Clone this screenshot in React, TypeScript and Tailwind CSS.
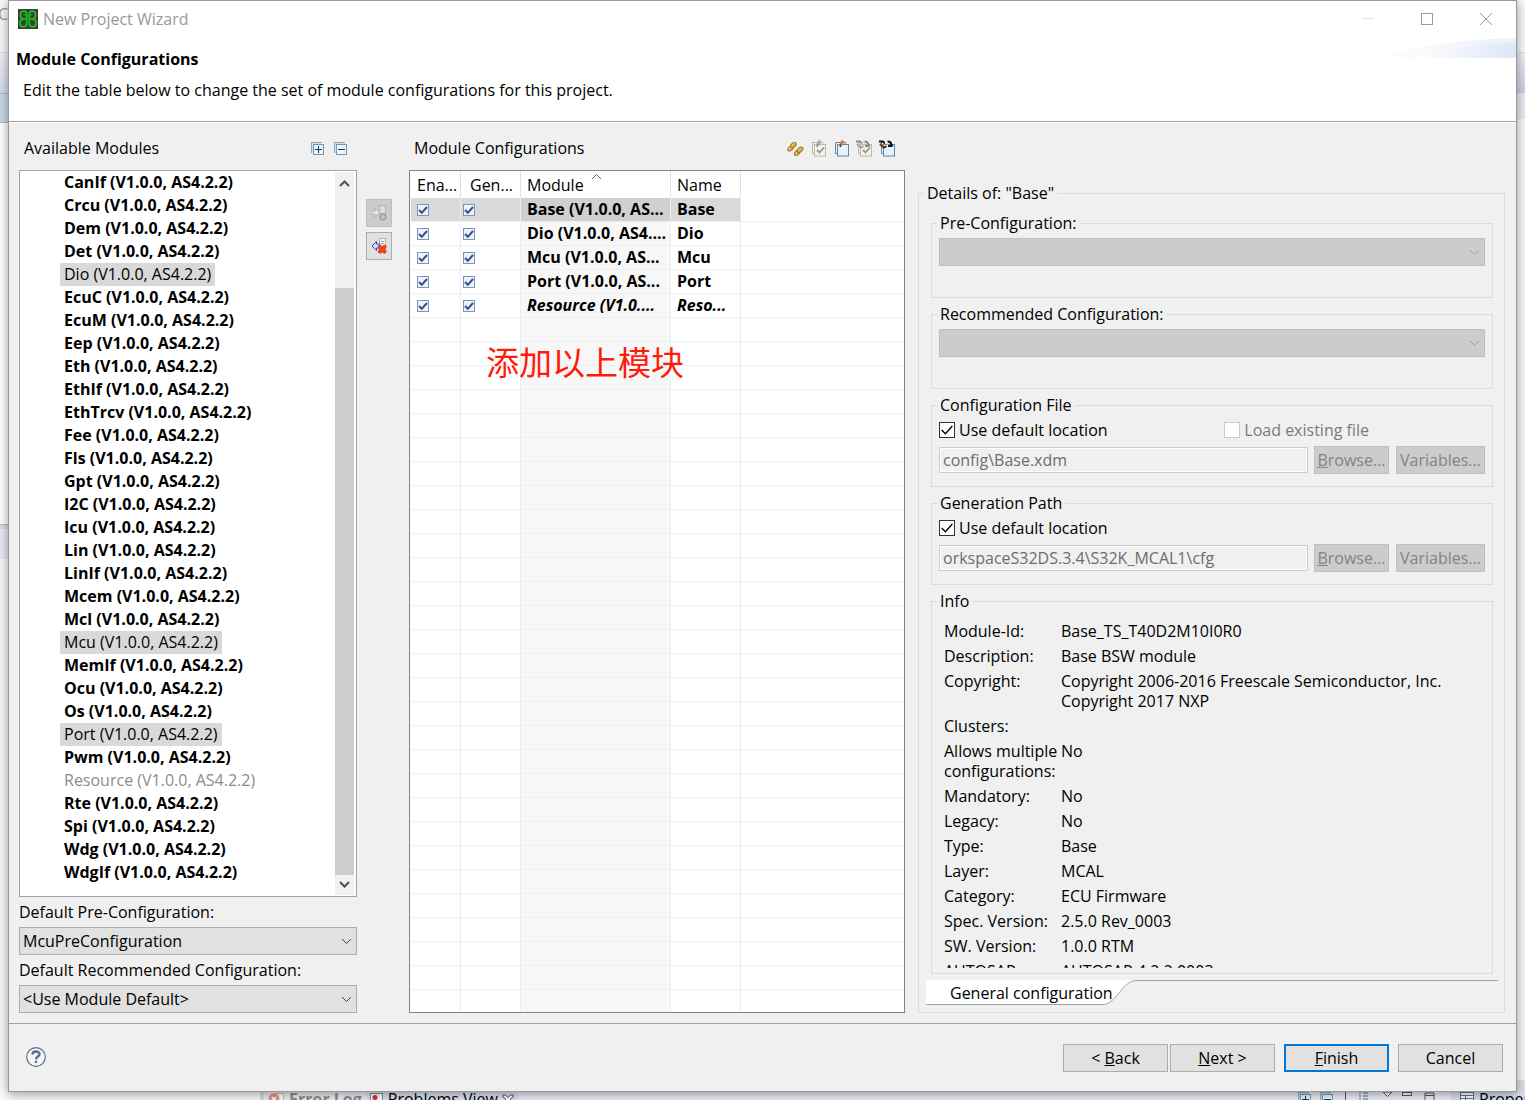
import React from 'react';

const modules = [
  'CanIf', 'Crcu', 'Dem', 'Det', 'Dio', 'EcuC', 'EcuM', 'Eep', 'Eth', 'EthIf', 'EthTrcv',
  'Fee', 'Fls', 'Gpt', 'I2C', 'Icu', 'Lin', 'LinIf', 'Mcem', 'Mcl', 'Mcu', 'MemIf', 'Ocu',
  'Os', 'Port', 'Pwm', 'Resource', 'Rte', 'Spi', 'Wdg', 'WdgIf',
];
const addedModules = ['Dio', 'Mcu', 'Port'];

const configurations = [
  { module: 'Base (V1.0.0, AS...', name: 'Base' },
  { module: 'Dio (V1.0.0, AS4....', name: 'Dio' },
  { module: 'Mcu (V1.0.0, AS...', name: 'Mcu' },
  { module: 'Port (V1.0.0, AS...', name: 'Port' },
  { module: 'Resource (V1.0....', name: 'Reso...' },
];
const emptyRows = Array.from({ length: 29 }, (_, i) => i);

const info = [
  ['Module-Id:', 'Base_TS_T40D2M10I0R0'],
  ['Description:', 'Base BSW module'],
  ['Copyright:', 'Copyright 2006-2016 Freescale Semiconductor, Inc.\nCopyright 2017 NXP'],
  ['Clusters:', ''],
  ['Allows multiple configurations:', 'No'],
  ['Mandatory:', 'No'],
  ['Legacy:', 'No'],
  ['Type:', 'Base'],
  ['Layer:', 'MCAL'],
  ['Category:', 'ECU Firmware'],
  ['Spec. Version:', '2.5.0 Rev_0003'],
  ['SW. Version:', '1.0.0 RTM'],
  ['AUTOSAR:', 'AUTOSAR 4.2.2 0003'],
];

const TreeIcon = ({ minus = false }: { minus?: boolean }) => (
  <svg width="14" height="14" viewBox="0 0 14 14" shapeRendering="crispEdges">
    <path d="M0.5 10.5V0.5H10.5" fill="none" stroke="#8fa9c4" />
    <path d="M1 1h10v2H3v8H1z" fill="#cfe3f0" />
    <rect x="2.5" y="2.5" width="10" height="10" fill="#eaf6fd" stroke="#7c93b0" />
    <path d={minus ? 'M4 7.5h7' : 'M4 7.5h7M7.5 4v7'} stroke="#0a3f78" />
  </svg>
);

const Chevron = ({ className = '' }: { className?: string }) => (
  <svg className={className} width="11" height="7" viewBox="0 0 11 7" fill="none" stroke="currentColor">
    <path d="M1 1l4.5 4.5L10 1" />
  </svg>
);

const Tick = ({ className = '' }: { className?: string }) => (
  <svg className={className} viewBox="0 0 12 12" fill="none" stroke="currentColor">
    <path d="M2 6l2.800 2.800L10 3" />
  </svg>
);

const ChainIcon = () => (
  <svg width="17" height="16" viewBox="0 0 18 16" fill="none">
    <g fill="#f4dc96" stroke="#a8741a" strokeWidth="1.300">
      <ellipse cx="3.800" cy="7.300" rx="2" ry="3.300" transform="rotate(50 3.800 7.300)" />
      <ellipse cx="6.800" cy="3.800" rx="2" ry="3.300" transform="rotate(50 6.800 3.800)" />
      <ellipse cx="10.800" cy="12" rx="2" ry="3.300" transform="rotate(50 10.800 12)" />
      <ellipse cx="13.800" cy="8.800" rx="2" ry="3.300" transform="rotate(50 13.800 8.800)" />
    </g>
    <path d="M3 8l2-1.800M6 5l2-1.800M10 12.800l2-1.800M13 9.800l2-1.800" stroke="#a8741a" />
  </svg>
);

const PagesIcon = ({ disabled = false, arrow = false }: { disabled?: boolean; arrow?: boolean }) => {
  const line = disabled ? '#b9b9ad' : '#5f86ab';
  const page = disabled ? '#f3f3ec' : '#e6f3fd';
  return (
    <svg width="17" height="17" viewBox="0 0 17 17" fill="none">
      <path d="M2.500 13.500v-11h10v3" fill={page} stroke={line} />
      <path d="M2.500 13.500h2" stroke={line} />
      <rect x="4.500" y="4.500" width="11" height="11.500" fill={page} stroke={line} />
      {disabled && <path d="M7 10l2.500 2.500 4.500-5" stroke="#96968c" strokeWidth="1.800" />}
      {arrow ? (
        <>
          <path d="M0 1.500h4l2 2M8.500 1.500l2.500.5 2.500 4.500M9 6h4" stroke={disabled ? '#8c8c86' : '#111'} strokeWidth="2" />
          <path d="M1 4l4.500 4" stroke={disabled ? '#b0b0a8' : '#8a3a1c'} strokeWidth="2.400" />
          <path d="M5 8l2.500-2" stroke={disabled ? '#8c8c86' : '#111'} strokeWidth="1.600" />
          <path d="M6 1.500l3.500 2.500" stroke={disabled ? '#d6d6ce' : '#f4ecb0'} strokeWidth="2" />
        </>
      ) : (
        <>
          <path d="M10 .5L8 5" stroke={disabled ? '#a9a9a0' : '#d5803c'} strokeWidth="3.200" />
          <path d="M7.800 4.500L7 7" stroke={disabled ? '#777' : '#3a2a20'} strokeWidth="1.500" />
        </>
      )}
    </svg>
  );
};

const Group = ({ title, className = '', children }: { title: string; className?: string; children: React.ReactNode }) => (
  <fieldset className={`min-w-0 border border-[#dcdcdc] px-[7px] ${className}`}>
    <legend className="-ml-[2px] px-[3px] leading-5">{title}</legend>
    {children}
  </fieldset>
);

const DisabledSelect = ({ label }: { label: string }) => (
  <div className="relative mt-[5px] mb-[31px]">
    <select aria-label={label} disabled className="block h-[28px] w-full appearance-none border border-[#bfbfbf] bg-[#cccccc] opacity-100" />
    <Chevron className="pointer-events-none absolute top-[11px] right-[5px] text-[#a0a0a0]" />
  </div>
);

const Check = ({ label, disabled = false }: { label: string; disabled?: boolean }) => (
  <label className={`flex items-center gap-1 ${disabled ? 'text-[#7a7a7a]' : ''}`}>
    <span className="relative flex">
      <input
        type="checkbox"
        defaultChecked={!disabled}
        disabled={disabled}
        className="peer size-4 appearance-none border border-[#333333] bg-white disabled:border-[#cccccc]"
      />
      <Tick className="pointer-events-none absolute inset-0 hidden size-4 text-black peer-checked:block" />
    </span>
    {label}
  </label>
);

const PathRow = ({ label, value }: { label: string; value: string }) => (
  <div className="mt-[6px] mb-3 flex items-center">
    <input
      aria-label={label}
      disabled
      defaultValue={value}
      className="h-[26px] min-w-0 flex-1 border border-[#cccccc] bg-[#f0f0f0] px-[3px] text-[#6d6d6d] ring-1 ring-white ring-inset"
    />
    <button disabled className="ml-[6px] h-[28px] w-[75px] border border-[#bfbfbf] bg-[#cccccc] text-[#838383]">
      <u>B</u>rowse...
    </button>
    <button disabled className="ml-[7px] h-[28px] w-[89px] border border-[#bfbfbf] bg-[#cccccc] text-[#838383]">
      Variables...
    </button>
  </div>
);

const DefaultSelect = ({ id, label, value }: { id: string; label: string; value: string }) => (
  <div>
    <label htmlFor={id} className="flex h-[30px] items-center">{label}</label>
    <div className="relative">
      <select id={id} className="block h-[28px] w-full appearance-none border border-[#adadad] bg-[#e1e1e1] pl-[3px]">
        <option>{value}</option>
      </select>
      <Chevron className="pointer-events-none absolute top-[11px] right-[5px] text-[#444444]" />
    </div>
  </div>
);

const TableCheck = ({ label }: { label: string }) => (
  <span className="relative block size-3">
    <input type="checkbox" defaultChecked aria-label={label} className="peer block size-3 appearance-none border border-[#7f93b3] bg-[#e8f5fd]" />
    <Tick className="pointer-events-none absolute inset-0 hidden size-3 stroke-2 text-[#3a4f7c] peer-checked:block" />
  </span>
);

// Workbench that stays partly visible around the dialog
const Workbench = () => (
  <div className="absolute inset-0 flex flex-col bg-[#f8f8f8]">
    <div className="flex min-h-0 flex-1 justify-between">
      <div className="w-2 overflow-hidden">
        <div className="flex h-[53px] justify-end border-b border-[#dddddd] pt-1 text-[#999999]">MC</div>
        <div className="h-10 bg-linear-to-b from-[#eef0f8] to-[#d5d9ea]" />
        <div className="h-[30px] border-y border-[#a9b9cf] bg-[#c9d8e6]" />
        <div className="h-[401px] bg-white" />
        <div className="h-[5px] border-t border-[#bbbbbb] bg-[#d6dcec]" />
        <div className="h-[30px] bg-[#e9eaf3]" />
      </div>
      <div className="w-2">
        <div className="h-[53px] border-b border-[#dddddd]" />
        <div className="h-10 bg-linear-to-b from-[#eef0f8] to-[#c9d0e4]" />
        <div className="h-[26px] bg-[#e9ebf3]" />
      </div>
    </div>
    <div className="flex h-5 overflow-hidden bg-[#eceef6] pt-[9px] leading-5">
      <div className="-mt-[9px] h-5 w-[260px] bg-[#fafafa]" />
      <div className="flex h-5 items-center gap-1 border-l-4 border-[#d5dbea] pl-1 font-bold text-[#8d8d8d]">
        <svg width="17" height="16" viewBox="0 0 17 16">
          <rect x="6.500" y="2.500" width="9" height="12" fill="#fff" stroke="#d9c38c" />
          <circle cx="6" cy="8" r="5.500" fill="#e98f94" />
          <path d="M4 6l4 4M8 6l-4 4" stroke="#fff" strokeWidth="1.500" />
        </svg>
        Error Log
      </div>
      <div className="ml-1 flex h-5 flex-1 items-center">
        <div className="flex items-center gap-1 bg-[#dde3ee] px-1">
          <svg width="14" height="16" viewBox="0 0 14 16">
            <rect x=".5" y="2.500" width="12" height="12" fill="#fff" stroke="#8794a8" />
            <circle cx="5" cy="6.500" r="2.500" fill="#d8323a" />
          </svg>
          Problems View
          <svg width="12" height="12" viewBox="0 0 12 12" fill="#fff" stroke="#555">
            <path d="M1 2h2.500L6 4.500 8.500 2H11v2L8 6.500 11 9v2H8.500L6 8.500 3.500 11H1V9l3-2.500L1 4z" />
          </svg>
        </div>
      </div>
      <div className="flex h-5 items-center gap-2 pr-4">
        <TreeIcon />
        <TreeIcon minus />
        <svg width="93" height="14" viewBox="0 0 93 14" fill="none" stroke="#555">
          <path d="M3.500 0v14" />
          <path d="M17 1h2M17 4h2M17 7h2M21 1h5M21 4h5M21 7h5" stroke="#4a6fa5" />
          <path d="M41 0h9l-4.500 4.500z" fill="#fff" />
          <rect x="60.500" y=".5" width="9" height="3" fill="#fff" />
          <path d="M83 12V1h9v11M83 3.500h9" />
        </svg>
      </div>
      <div className="-mt-[9px] flex w-[74px] items-start gap-1 overflow-hidden bg-[#d9e0ee] pt-[9px] pl-[9px] whitespace-nowrap">
        <svg className="mt-[3px] shrink-0" width="15" height="14" viewBox="0 0 15 14">
          <rect x=".5" y=".5" width="13" height="12" fill="#fff" stroke="#65728c" />
          <path d="M1 3.500h13M5.500 3v10M1 6.500h13M1 9.500h13" stroke="#65728c" />
        </svg>
        Properties
      </div>
    </div>
  </div>
);

const TitleBar = () => (
  <div className="flex h-[36px] items-center bg-white pr-px pl-[9px] text-[#999999]">
    <svg width="20" height="20" viewBox="0 0 20 20" fill="none">
      <rect width="20" height="20" fill="#3d3d3d" />
      <g stroke="#14c914" strokeWidth="1.700" strokeLinejoin="round">
        <path d="M8.700 5C8.700 1.300 2.500 1.300 2.500 4.800v2c0 2.300 1.800 3.200 4 3.200h2.200zM8.700 10H6.500C4 10 2 11 2 13.300v1.500c0 4 6.700 4 6.700 0z" />
        <path d="M11.300 5c0-3.700 6.200-3.700 6.200-.2v2c0 2.300-1.800 3.200-4 3.200h-2.200zM11.300 10h2.200c2.500 0 4.500 1 4.500 3.300v1.500c0 4-6.700 4-6.700 0z" />
        <path d="M5.500 6h3M11.300 6h3" strokeWidth="1" />
      </g>
    </svg>
    <span className="ml-[5px] flex-1">New Project Wizard</span>
    <button aria-label="Minimize" className="flex w-[59px] justify-center text-[#e3e3e3]">
      <svg width="12" height="12" stroke="currentColor"><path d="M0 5.500h12" /></svg>
    </button>
    <button aria-label="Maximize" className="flex w-[59px] justify-center">
      <svg width="12" height="12" stroke="currentColor" fill="none"><rect x=".5" y=".5" width="11" height="11" /></svg>
    </button>
    <button aria-label="Close" className="flex w-[59px] justify-center">
      <svg width="12" height="12" stroke="currentColor"><path d="M0 0l12 12M12 0L0 12" /></svg>
    </button>
  </div>
);

const AvailableModules = () => (
  <section className="flex min-h-0 min-w-0 flex-[338_1_0%] flex-col">
    <div className="flex h-[47px] shrink-0 items-center pt-1 pr-[9px] pl-[5px]">
      <h2 className="flex-1 pb-px">Available Modules</h2>
      <button aria-label="Expand all"><TreeIcon /></button>
      <button aria-label="Collapse all" className="ml-[9px]"><TreeIcon minus /></button>
    </div>
    <div className="flex min-h-0 flex-1 justify-between border border-[#a0a3ad] bg-white">
      <ul className="overflow-hidden pl-10">
        {modules.map((name) => {
          let style = 'font-bold';
          if (addedModules.includes(name)) style = 'bg-[#d9d9d9]';
          if (name === 'Resource') style = 'text-[#8c8c8c]';
          return (
            <li key={name} className="flex h-[23px]">
              <span className={`px-1 leading-[23px] ${style}`}>{name} (V1.0.0, AS4.2.2)</span>
            </li>
          );
        })}
      </ul>
      <div className="my-px mr-[2px] flex w-[19px] flex-col items-center bg-[#f0f0f0] text-[#505050]">
        <Chevron className="mt-2 shrink-0 rotate-180 stroke-2" />
        <div className="mt-[101px] w-full flex-1 bg-[#cdcdcd]" />
        <Chevron className="mt-[6px] mb-[7px] shrink-0 stroke-2" />
      </div>
    </div>
    <DefaultSelect id="default-pre" label="Default Pre-Configuration:" value="McuPreConfiguration" />
    <DefaultSelect id="default-rec" label="Default Recommended Configuration:" value="<Use Module Default>" />
  </section>
);

const ModuleTable = () => (
  <section className="ml-[17px] flex min-h-0 min-w-0 flex-[496_1_0%] flex-col">
    <div className="flex h-[47px] shrink-0 items-center gap-[6px] pt-1 pr-[9px] pl-[5px]">
      <h2 className="flex-1 pb-px">Module Configurations</h2>
      <button aria-label="Link"><ChainIcon /></button>
      <button aria-label="Check all" disabled><PagesIcon disabled /></button>
      <button aria-label="Edit"><PagesIcon /></button>
      <button aria-label="Import checked" disabled><PagesIcon disabled arrow /></button>
      <button aria-label="Import"><PagesIcon arrow /></button>
    </div>
    <div className="relative min-h-0 flex-1 overflow-hidden border border-[#82838f] bg-white pl-px">
      <table className="w-full table-fixed border-separate border-spacing-0">
        <colgroup>
          <col className="w-[50px]" />
          <col className="w-[60px]" />
          <col className="w-[150px]" />
          <col className="w-[70px]" />
          <col />
        </colgroup>
        <thead>
          <tr className="h-[27px] text-left *:border-r *:border-[#e2e2e2] *:font-normal">
            <th className="pl-[6px]">Ena...</th>
            <th className="pl-[9px]">Gen...</th>
            <th className="relative pl-[6px]">
              Module
              <Chevron className="absolute top-[2px] left-[70px] rotate-180 text-[#666666]" />
            </th>
            <th className="pl-[6px]">Name</th>
            <th className="border-r-0!" />
          </tr>
        </thead>
        <tbody>
          {configurations.map((row, i) => (
            <tr
              key={row.name}
              className={`h-6 font-bold whitespace-nowrap *:border-r *:border-b *:border-r-[#e6eef9] *:border-b-[#efefef] ${i === 4 ? 'italic' : ''} ${i === 0 ? '*:bg-[#d9d9d9]' : ''}`}
            >
              <td className="pl-[6px]"><TableCheck label={`Enable ${row.name}`} /></td>
              <td className="pl-[2px]"><TableCheck label={`Generate ${row.name}`} /></td>
              <td className={`pb-[2px] pl-[6px] ${i === 0 ? 'bg-[#d0d0d0]!' : 'bg-[#f7f7f7]'}`}>{row.module}</td>
              <td className="pb-[2px] pl-[6px]">{row.name}</td>
              <td className="border-r-0! bg-white!" />
            </tr>
          ))}
          {emptyRows.map((i) => (
            <tr key={i} className="h-6 *:border-r *:border-b *:border-r-[#e6eef9] *:border-b-[#efefef]">
              <td />
              <td />
              <td className="bg-[#f7f7f7]" />
              <td />
              <td className="border-r-0!" />
            </tr>
          ))}
        </tbody>
      </table>
      <p className="absolute top-[166px] left-[76px] font-['Noto_Sans_CJK_SC',sans-serif] text-[33px] leading-[48px] text-[#ff1a0a]">
        添加以上模块
      </p>
    </div>
  </section>
);

const Details = () => (
  <section className="ml-[13px] flex min-h-0 min-w-0 flex-[587_1_0%] flex-col pt-[60px]">
    <fieldset className="flex min-h-0 min-w-0 flex-1 flex-col border border-[#dcdcdc] pb-[7px]">
      <legend className="ml-[5px] px-[3px] leading-5">Details of: "Base"</legend>
      <div className="flex min-h-0 flex-1 flex-col gap-[6px] pt-[10px]">
        <div className="mr-[11px] ml-3 flex min-h-0 flex-1 flex-col gap-[6px]">
          <Group title="Pre-Configuration:">
            <DisabledSelect label="Pre-Configuration" />
          </Group>
          <Group title="Recommended Configuration:">
            <DisabledSelect label="Recommended Configuration" />
          </Group>
          <Group title="Configuration File">
            <div className="mt-[5px] flex h-5 items-center justify-between pr-[116px]">
              <Check label="Use default location" />
              <Check label="Load existing file" disabled />
            </div>
            <PathRow label="Configuration file" value="config\Base.xdm" />
          </Group>
          <Group title="Generation Path">
            <div className="mt-[5px] flex h-5 items-center">
              <Check label="Use default location" />
            </div>
            <PathRow label="Generation path" value="orkspaceS32DS.3.4\S32K_MCAL1\cfg" />
          </Group>
          <Group title="Info" className="flex min-h-0 flex-1 flex-col pb-[5px]">
            <dl className="flex min-h-0 flex-1 flex-col gap-[5px] overflow-hidden pt-[10px] pl-[5px] leading-5">
              {info.map(([term, value]) => (
                <div key={term} className="flex shrink-0">
                  <dt className="w-[117px] shrink-0">{term}</dt>
                  <dd className="whitespace-pre-line">{value}</dd>
                </div>
              ))}
            </dl>
          </Group>
        </div>
        <div className="mr-[6px] ml-[7px] flex h-[25px]">
          <button className="relative isolate pl-6 leading-6">
            <span className="absolute inset-y-0 right-[9px] left-0 -z-10 border-b border-[#a0a0a0] bg-white" />
            <svg className="absolute top-0 left-full -z-10 -ml-[9px]" width="38" height="25" viewBox="0 0 38 25">
              <path d="M0 24.500C14 22 18 .5 33 .5L22 0H0z" fill="#fff" />
              <path d="M0 24.500C14 22 18 .5 33 .5H38" fill="none" stroke="#a0a0a0" />
            </svg>
            General configuration
          </button>
          <div className="ml-[29px] flex-1 border-t border-[#a0a0a0]" />
        </div>
      </div>
    </fieldset>
  </section>
);

const App = () => {
  const button = 'h-[28px] w-[105px] border border-[#adadad] bg-[#e1e1e1]';
  return (
    <div className="relative flex h-screen flex-col overflow-hidden px-2 pb-2 font-['Open_Sans','Noto_Sans_CJK_SC',sans-serif] text-base leading-5 text-black">
      <Workbench />
      <main className="relative flex min-h-0 flex-1 flex-col border border-[#999999] bg-[#f0f0f0] shadow-[0_2px_10px_rgba(0,0,0,0.4)]">
        <TitleBar />
        <header className="relative h-[85px] shrink-0 border-b border-[#a0a0a0] bg-white">
          <svg className="absolute top-px right-0" width="140" height="20" viewBox="0 0 140 20" preserveAspectRatio="none">
            <defs>
              <linearGradient id="wave">
                <stop offset="0" stopColor="#fff" />
                <stop offset="1" stopColor="#dde5f7" />
              </linearGradient>
            </defs>
            <path d="M0 20C40 8 90 1 140 0V20z" fill="url(#wave)" opacity=".6" />
            <path d="M40 20C70 10 100 6 140 5V20z" fill="url(#wave)" />
          </svg>
          <h1 className="pt-3 pl-[7px] font-bold">Module Configurations</h1>
          <p className="pt-[11px] pl-[14px]">Edit the table below to change the set of module configurations for this project.</p>
        </header>
        <div className="flex min-h-0 flex-1 border-t border-white pr-[11px] pb-[10px] pl-[10px]">
          <AvailableModules />
          <div className="ml-[9px] flex w-[26px] shrink-0 flex-col gap-[5px] pt-[76px]">
            <button aria-label="Add module" disabled className="flex h-[28px] items-center justify-center border border-[#bfbfbf] bg-[#cccccc]">
              <svg width="16" height="16" viewBox="0 0 16 16">
                <rect x="8.500" y=".5" width="6" height="8" fill="#dedede" stroke="#b2b2b2" />
                <path d="M0 6h4V3l5 4.500L4 12V9H0z" fill="#e4e4e4" stroke="#aaaaaa" strokeWidth=".8" />
                <circle cx="12" cy="12" r="2.800" fill="#cccccc" stroke="#a6a6a6" strokeWidth="2" />
              </svg>
            </button>
            <button aria-label="Remove module" className="flex h-[28px] items-center justify-center border border-[#adadad] bg-[#e1e1e1]">
              <svg width="16" height="16" viewBox="0 0 16 16">
                <rect x="8.500" y=".5" width="6" height="9" fill="#fffbe8" stroke="#c4ae77" />
                <path d="M10 3.500h3M10 5.500h3" stroke="#8b9dc0" />
                <path d="M1 8l4.500-4.500V6H9v4H5.500v2.500z" fill="#d5ddff" stroke="#3a44b8" />
                <path d="M7 8l2-1 2 1.500L13.500 7 15.500 8.500 14 11l1.500 3-2 1.500-2.500-1.500L9 15.500 7 14l1.500-3z" fill="#ee4422" stroke="#b32b10" strokeWidth=".6" />
              </svg>
            </button>
          </div>
          <ModuleTable />
          <Details />
        </div>
        <footer className="flex h-[68px] shrink-0 items-center border-t border-[#a0a0a0] pr-[13px] pl-[17px]">
          <button aria-label="Help" className="mr-auto pb-[2px]">
            <svg width="20" height="20" viewBox="0 0 20 20" fill="none" stroke="#5d6b8d">
              <circle cx="10" cy="10" r="9.300" fill="#f4f5f8" strokeWidth="1.200" />
              <path d="M6.500 7.500C6.500 3.500 13.500 3.500 13.500 7.200 13.500 9.500 10 9.500 10 12.300M10 13.800v2.200" strokeWidth="2.400" />
            </svg>
          </button>
          <button className={button}>&lt; <u>B</u>ack</button>
          <button className={`${button} ml-[2px]`}><u>N</u>ext &gt;</button>
          <button className="ml-[9px] h-[28px] w-[105px] border-2 border-[#0078d7] bg-[#e1e1e1]"><u>F</u>inish</button>
          <button className={`${button} ml-[9px]`}>Cancel</button>
        </footer>
      </main>
    </div>
  );
};

export default App;
